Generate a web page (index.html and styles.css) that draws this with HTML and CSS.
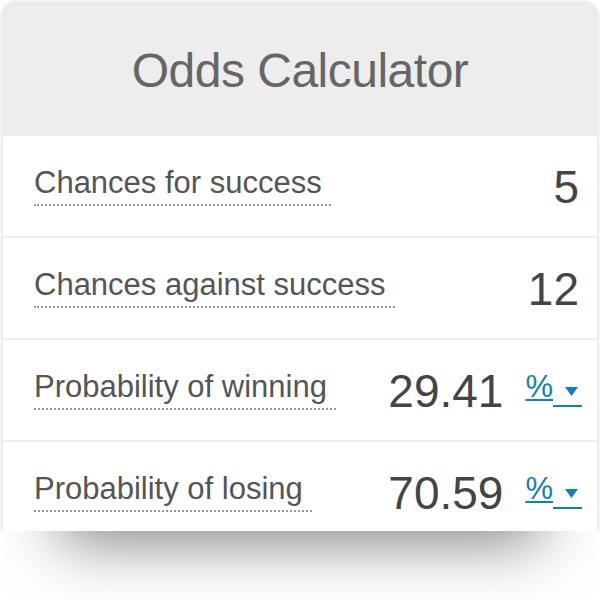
FILE: index.html
```html
<!DOCTYPE html>
<html lang="en">
<head>
<meta charset="utf-8">
<title>Odds Calculator</title>
<link rel="stylesheet" href="styles.css">
</head>
<body>
  <div class="frame">
    <section class="calc">
      <header class="calc-head">
        <h1 class="calc-title">Odds Calculator</h1>
      </header>
      <div class="calc-body">
        <div class="row">
          <span class="label">Chances for success</span>
          <span class="value">5</span>
        </div>
        <div class="row">
          <span class="label">Chances against success</span>
          <span class="value">12</span>
        </div>
        <div class="row has-unit">
          <span class="label">Probability of winning</span>
          <span class="value">29.41</span>
          <span class="unit">
            <span class="unit-sym">%</span>
            <span class="unit-caret"><svg width="13" height="9" viewBox="0 0 13 9"><polygon points="0,0 13,0 6.5,9" fill="currentColor"/></svg></span>
          </span>
        </div>
        <div class="row has-unit">
          <span class="label">Probability of losing</span>
          <span class="value">70.59</span>
          <span class="unit">
            <span class="unit-sym">%</span>
            <span class="unit-caret"><svg width="13" height="9" viewBox="0 0 13 9"><polygon points="0,0 13,0 6.5,9" fill="currentColor"/></svg></span>
          </span>
        </div>
      </div>
    </section>
  </div>
</body>
</html>
```
FILE: styles.css
```css
html, body {
  margin: 0;
  padding: 0;
  background: #ffffff;
}

body {
  min-height: 600px;
  font-family: "Liberation Sans", Arial, sans-serif;
}

*, *::before, *::after {
  box-sizing: border-box;
}

/* soft drop shadow under the card */
.frame {
  width: 600px;
  height: 531px;
  border-radius: 16px 16px 0 0;
  box-shadow: 0 70px 60px -60px rgba(0, 0, 0, 0.5);
}

/* calculator card */
.calc {
  width: 600px;
  height: 531px;
  overflow: hidden;
  background: #ededed;
  border: 1px solid #f7f7f7;
  border-bottom: none;
  border-radius: 16px 16px 0 0;
}

.calc-head {
  height: 135px;
  display: flex;
  align-items: center;
  justify-content: center;
  padding-top: 4px;
}

.calc-title {
  margin: 0;
  font-size: 48px;
  line-height: 48px;
  font-weight: normal;
  letter-spacing: -0.5px;
  color: #666666;
}

.calc-body {
  margin: 0 2px;
  background: #ffffff;
  border-radius: 3px 3px 0 0;
}

/* one input line */
.row {
  height: 102px;
  border-bottom: 2px solid #efefef;
  display: flex;
  align-items: flex-start;
  padding: 26px 15px 0 31px;
}

.label {
  margin-top: 3px;
  margin-right: auto;
  padding: 0 9px 3px 0;
  font-size: 31px;
  line-height: 36px;
  color: #555555;
  border-bottom: 2px dotted #999999;
}

.value {
  margin-top: 1px;
  margin-right: 3px;
  font-size: 46px;
  line-height: 48px;
  color: #444444;
}

.has-unit .value {
  margin-right: 0;
}

/* unit selector */
.unit {
  margin-left: 22px;
  margin-top: 5px;
  display: flex;
  align-items: flex-start;
  color: #0f80bd;
}

.unit-sym {
  font-size: 31px;
  line-height: 32px;
  text-decoration: underline;
  text-decoration-thickness: 2px;
  text-underline-offset: 2px;
}

.unit-caret {
  width: 29px;
  height: 36px;
  border-bottom: 2px solid #0f80bd;
  display: flex;
  justify-content: flex-end;
  align-items: flex-start;
  padding: 16px 4px 0 0;
}

.unit-caret svg {
  display: block;
}
```
